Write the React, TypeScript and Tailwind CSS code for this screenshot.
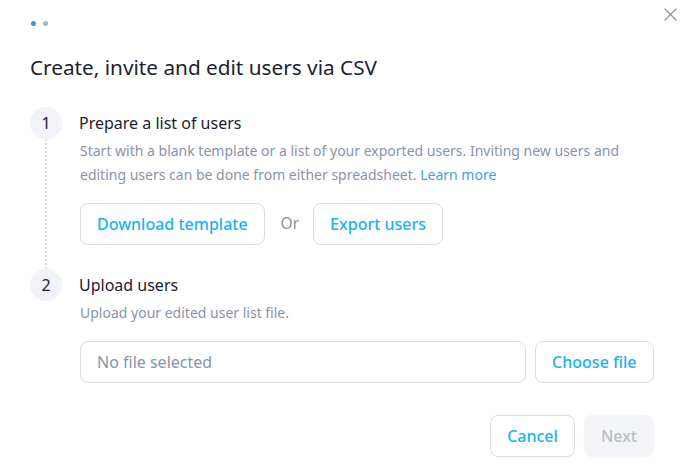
import React from "react";

export default function App() {
  return (
    <div
      className="relative w-[693px] h-[464px] bg-white overflow-hidden"
      style={{ fontFamily: '"Noto Sans", "Open Sans", sans-serif' }}
    >
      <button className="absolute right-[16px] top-[7px] w-[14px] h-[14px] flex items-center justify-center text-[#8e96a8]">
        <svg width="13" height="13" viewBox="0 0 13 13" fill="none" stroke="currentColor" strokeWidth="1.3" strokeLinecap="round">
          <path d="M1 1L12 12M12 1L1 12" />
        </svg>
      </button>

      <div className="pl-[30px] pr-[39px] pt-[21px]">
        <div className="flex gap-[7px] pl-[1px]">
          <span className="w-[5px] h-[5px] rounded-full bg-[#2f9be6]" />
          <span className="w-[5px] h-[5px] rounded-full bg-[#a9b0c0]" />
        </div>

        <h1 className="mt-[27px] text-[20.75px] leading-[28px] text-[#1c2130] font-normal">
          Create, invite and edit users via CSV
        </h1>

        <div className="mt-[26px]">
          <div className="flex gap-[18px]">
            <div className="flex flex-col items-center w-[32px]">
              <div className="w-[32px] h-[32px] rounded-full bg-[#f1f3f8] flex items-center justify-center text-[16px] text-[#1c2130]">
                1
              </div>
              <div className="flex-1 border-l-2 border-dotted border-[#dde1e9]" />
            </div>
            <div className="flex-1 pb-[24px]">
              <div className="h-[32px] flex items-center text-[16px] text-[#1c2130] -ml-[1px]">
                Prepare a list of users
              </div>
              <p className="text-[14px] leading-[24px] text-[#8a93a7]">
                Start with a blank template or a list of your exported users. Inviting new users and editing users can be done from either spreadsheet.{" "}
                <span className="text-[#3aa3e6]">Learn more</span>
              </p>
              <div className="mt-[16px] flex items-center">
                <button className="h-[42px] px-[16px] rounded-[8px] border border-[#d8dce5] text-[16px] font-medium text-[#14b4f5]">
                  Download template
                </button>
                <span className="ml-[16px] mr-[14px] text-[15.5px] text-[#8a93a7]">Or</span>
                <button className="h-[42px] px-[16px] rounded-[8px] border border-[#d8dce5] text-[16px] font-medium text-[#14b4f5]">
                  Export users
                </button>
              </div>
            </div>
          </div>

          <div className="flex gap-[18px]">
            <div className="flex flex-col items-center w-[32px]">
              <div className="w-[32px] h-[32px] rounded-full bg-[#f1f3f8] flex items-center justify-center text-[16px] text-[#1c2130]">
                2
              </div>
            </div>
            <div className="flex-1">
              <div className="h-[32px] flex items-center text-[16px] text-[#1c2130] -ml-[1px]">
                Upload users
              </div>
              <p className="text-[14px] leading-[24px] text-[#8a93a7]">
                Upload your edited user list file.
              </p>
              <div className="mt-[16px] flex gap-[9px]">
                <div className="flex-1 h-[42px] rounded-[8px] border border-[#d8dce5] flex items-center px-[16px] text-[16px] text-[#8a93a7]">
                  No file selected
                </div>
                <button className="h-[42px] px-[16.5px] rounded-[8px] border border-[#d8dce5] text-[16px] font-medium text-[#14b4f5]">
                  Choose file
                </button>
              </div>
            </div>
          </div>
        </div>

        <div className="mt-[32px] flex justify-end gap-[9px]">
          <button className="h-[42px] px-[16px] rounded-[8px] border border-[#d8dce5] text-[16px] font-medium text-[#14b4f5]">
            Cancel
          </button>
          <button className="h-[42px] px-[17px] rounded-[8px] bg-[#f3f4f8] text-[16px] font-medium text-[#b8bcc6]">
            Next
          </button>
        </div>
      </div>
    </div>
  );
}
